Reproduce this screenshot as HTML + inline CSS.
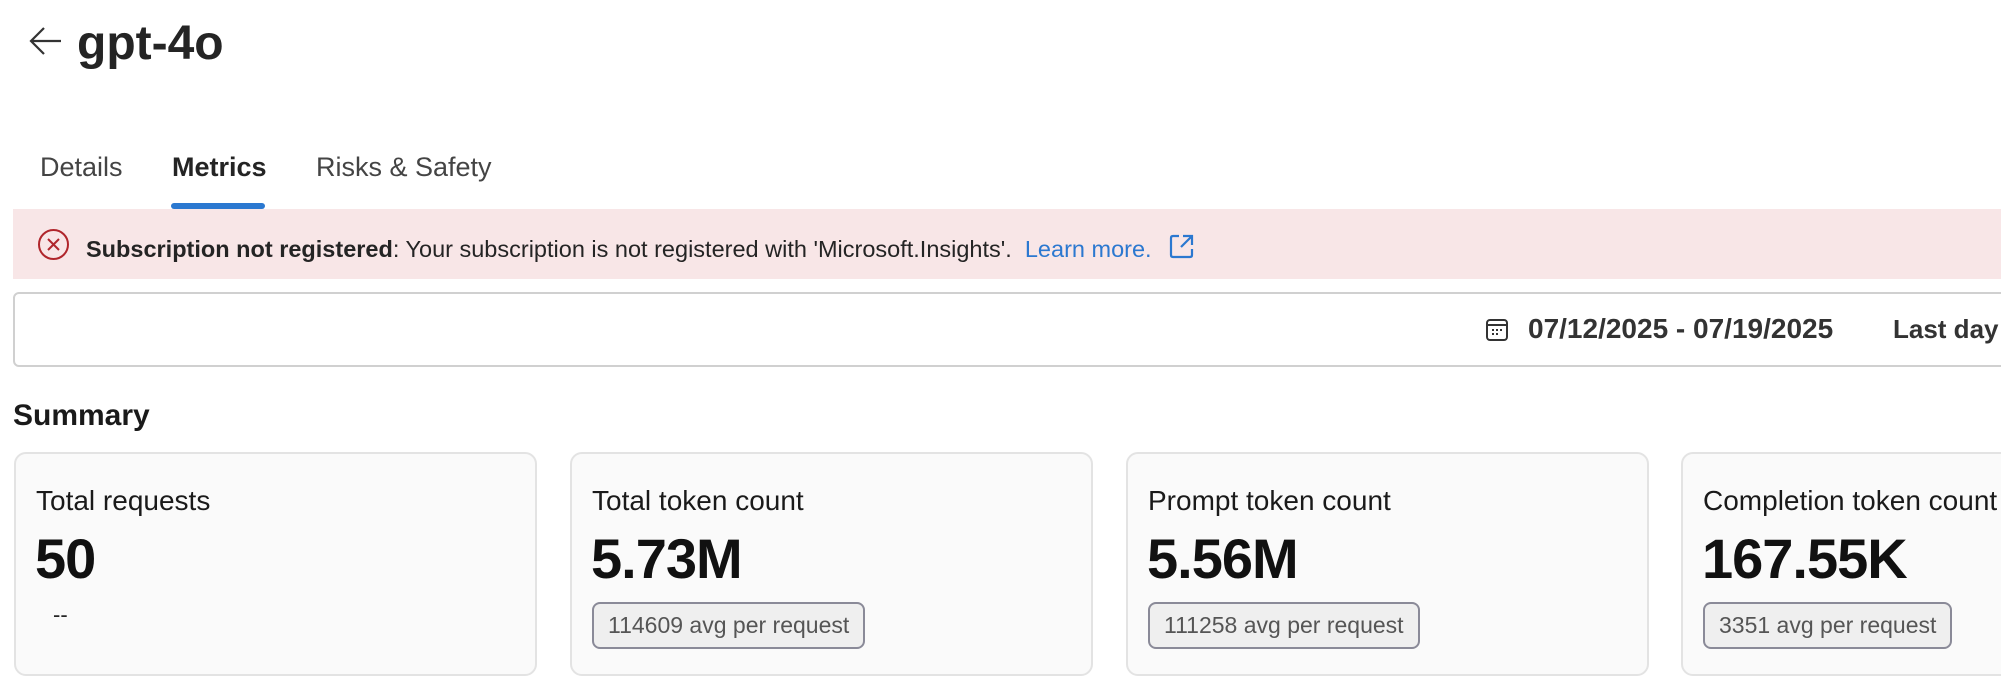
<!DOCTYPE html>
<html><head><meta charset="utf-8"><style>
*{box-sizing:border-box;margin:0;padding:0}
body{width:2001px;height:693px;overflow:hidden;background:#fff;font-family:"Liberation Sans",sans-serif;color:#242424;position:relative}
.abs{position:absolute;white-space:nowrap}
.card{position:absolute;top:452px;width:523px;height:224px;background:#fafafa;border:2px solid #e3e3e3;border-radius:12px}
.lbl{position:absolute;left:20px;top:31px;font-size:28px;color:#1a1a1a}
.val{position:absolute;left:19px;top:72px;font-size:56px;font-weight:bold;color:#111;letter-spacing:-1px}
.badge{position:absolute;left:20px;top:148px;height:47px;padding:0 14px;border:2px solid #8a8a98;border-radius:8px;background:#efefef;font-size:23px;color:#555;line-height:43px}
</style></head><body>
<svg class="abs" style="left:28px;top:26px" width="34" height="30" viewBox="0 0 34 30"><path d="M16 2 L3 15 L16 28 M3 15 H33" fill="none" stroke="#333" stroke-width="2.2"/></svg>
<div class="abs" style="left:77px;top:16px;font-size:48px;font-weight:bold;color:#242424">gpt-4o</div>
<div class="abs" style="left:40px;top:152px;font-size:27px;color:#444">Details</div>
<div class="abs" style="left:172px;top:152px;font-size:27px;font-weight:bold;color:#242424">Metrics</div>
<div class="abs" style="left:316px;top:152px;font-size:27px;color:#444">Risks &amp; Safety</div>
<div class="abs" style="left:171px;top:203px;width:94px;height:6px;background:#2b78d0;border-radius:3px"></div>
<div class="abs" style="left:13px;top:209px;width:1988px;height:70px;background:#f8e6e7"></div>
<svg class="abs" style="left:37px;top:228px" width="33" height="33" viewBox="0 0 33 33"><circle cx="16.5" cy="16.5" r="14.5" fill="none" stroke="#b0262c" stroke-width="2"/><path d="M11 11 L22 22 M22 11 L11 22" stroke="#b0262c" stroke-width="2"/></svg>
<div class="abs" style="left:86px;top:235px;font-size:23.5px;line-height:28px;color:#242424"><b>Subscription not registered</b>: Your subscription is not registered with 'Microsoft.Insights'.&nbsp; <span style="color:#2b78d0">Learn more.</span></div>
<svg class="abs" style="left:1169px;top:234px" width="25" height="25" viewBox="0 0 25 25"><path d="M10 2 H4 Q2 2 2 4 V21 Q2 23 4 23 H21 Q23 23 23 21 V15 M14 2 H23 V11 M23 2 L12 13" fill="none" stroke="#2b78d0" stroke-width="2.2"/></svg>
<div class="abs" style="left:13px;top:292px;width:2010px;height:75px;border:2px solid #d0d0d0;border-radius:6px"></div>
<svg class="abs" style="left:1485px;top:318px" width="24" height="24" viewBox="0 0 24 24"><rect x="2" y="2" width="20" height="20" rx="3" fill="none" stroke="#333" stroke-width="2"/><path d="M2 7 H22" stroke="#333" stroke-width="2"/><g fill="#333"><rect x="7" y="11" width="2" height="2"/><rect x="11" y="11" width="2" height="2"/><rect x="15" y="11" width="2" height="2"/><rect x="7" y="15" width="2" height="2"/><rect x="11" y="15" width="2" height="2"/></g></svg>
<div class="abs" style="left:1528px;top:313px;font-size:28px;font-weight:bold;color:#333">07/12/2025 - 07/19/2025</div>
<div class="abs" style="left:1893px;top:314px;font-size:26px;font-weight:bold;color:#333">Last day</div>
<div class="abs" style="left:13px;top:399px;font-size:30px;font-weight:bold;color:#1a1a1a">Summary</div>
<div class="card" style="left:14px"><div class="lbl">Total requests</div><div class="val">50</div><div class="abs" style="left:37px;top:148px;font-size:22px">--</div></div>
<div class="card" style="left:570px"><div class="lbl">Total token count</div><div class="val">5.73M</div><div class="badge">114609 avg per request</div></div>
<div class="card" style="left:1126px"><div class="lbl">Prompt token count</div><div class="val">5.56M</div><div class="badge">111258 avg per request</div></div>
<div class="card" style="left:1681px"><div class="lbl">Completion token count</div><div class="val">167.55K</div><div class="badge">3351 avg per request</div></div>
</body></html>
